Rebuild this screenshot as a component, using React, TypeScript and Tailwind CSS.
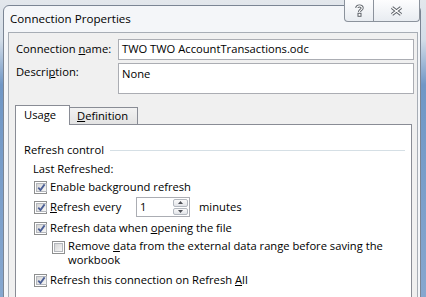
import type { ReactElement, ReactNode } from 'react';

/** Win7-style checkbox */
function CheckBox({ checked }: { checked: boolean }): ReactElement {
  return (
    <span className="flex h-[13px] w-[13px] shrink-0 border border-[#8e8f8f] bg-white p-px">
      <span className="flex flex-1 items-center justify-center border border-[#b4b7bc] bg-[linear-gradient(135deg,#d6d6d6,#f6f6f6)]">
        {checked && (
          <svg width="9" height="9" viewBox="0 0 9 9">
            <path d="M1.3 4.6 L3.5 7 L7.6 1.4" fill="none" stroke="#4b5f96" strokeWidth="1.8" />
          </svg>
        )}
      </span>
    </span>
  );
}

function CheckRow({ checked, children, className }: { checked: boolean; children: ReactNode; className: string }): ReactElement {
  return (
    <div className={`flex h-[16px] items-center gap-[3px] pl-[18px] ${className}`}>
      <CheckBox checked={checked} />
      <span>{children}</span>
    </div>
  );
}

export default function App(): ReactElement {
  return (
    <div className="h-[297px] w-[426px] overflow-hidden bg-[linear-gradient(180deg,#e3e7ec_0px,#d3dde8_40px,#7097c6_85px,#86a7cf_297px)] font-['Open_Sans',sans-serif] text-[11.2px] text-black">
      <div className="ml-[3px] mt-[5px] flex h-[300px] w-[418px] flex-col rounded-t-[6px] border border-[#7b8594] bg-[#f4f6f9]">
        {/* title bar */}
        <div className="flex h-[26px] shrink-0 items-center pl-[6px]">
          <span className="text-[11.6px]">Connection Properties</span>
          <div className="-mt-[6px] ml-auto flex h-[22px] self-start">
            <div className="flex w-[30px] items-center justify-center rounded-bl-[4px] border border-t-0 border-[#8b929c] bg-[linear-gradient(180deg,#fdfdfe,#e8ecf1)]">
              <svg width="9" height="13" viewBox="0 0 9 13">
                <path d="M1.8 4 C1.8 1.2 7.2 1.2 7.2 4 C7.2 5.8 4.5 6 4.5 8" fill="none" stroke="#5a5f66" strokeWidth="3" />
                <path d="M1.8 4 C1.8 1.2 7.2 1.2 7.2 4 C7.2 5.8 4.5 6 4.5 8" fill="none" stroke="#ffffff" strokeWidth="1.2" />
                <rect x="3" y="9.3" width="3" height="3" fill="#ffffff" stroke="#5a5f66" strokeWidth="1" />
              </svg>
            </div>
            <div className="flex w-[46px] items-center justify-center rounded-br-[4px] border border-l-0 border-t-0 border-[#8b929c] bg-[linear-gradient(180deg,#fdfdfe,#e8ecf1)]">
              <svg width="13" height="10" viewBox="0 0 13 10">
                <path d="M2 1.5 L11 8.5 M11 1.5 L2 8.5" fill="none" stroke="#5a5f66" strokeWidth="3.4" />
                <path d="M2 1.5 L11 8.5 M11 1.5 L2 8.5" fill="none" stroke="#ffffff" strokeWidth="1.4" />
              </svg>
            </div>
          </div>
        </div>

        {/* client area */}
        <div className="ml-[4px] flex w-[410px] flex-1 flex-col border border-[#a7adb5] bg-[#f0f0f0] pt-[6px]">
          <div className="flex h-[21px] items-center pl-[7px]">
            <span className="w-[102px]">
              Connection <u>n</u>ame:
            </span>
            <div className="flex h-[21px] w-[296px] items-center border border-[#abadb3] bg-white pl-[3px]">
              TWO TWO AccountTransactions.odc
            </div>
          </div>
          <div className="mt-[3px] flex h-[31px] pl-[7px]">
            <span className="w-[102px] pt-[1px]">
              Descri<u>p</u>tion:
            </span>
            <div className="h-[31px] w-[296px] border border-[#abadb3] bg-white pl-[3px] pt-[2px]">None</div>
          </div>

          {/* tabs */}
          <div className="ml-[6px] mt-[11px] flex items-end">
            <div className="relative z-10 -mb-px flex h-[20px] w-[55px] items-center border border-b-0 border-[#898c95] bg-white pl-[8px]">
              Usa<u>g</u>e
            </div>
            <div className="flex h-[17px] w-[68px] items-center border border-b-0 border-l-0 border-[#898c95] bg-[linear-gradient(180deg,#f2f2f2,#e3e3e3)] pl-[7px]">
              <u>D</u>efinition
            </div>
          </div>
          <div className="ml-[6px] mr-[5px] flex flex-1 flex-col border border-[#898c95] bg-white">
            <div className="mt-[17px] flex h-[16px] items-center pl-[8px] pr-[6px]">
              <span>Refresh control</span>
              <div className="ml-[6px] h-px flex-1 bg-[#d5dfe5]" />
            </div>
            <div className="mt-[3px] flex h-[16px] items-center pl-[17px]">Last Refreshed:</div>
            <CheckRow checked className="mt-[2px]">
              Enable back<u>g</u>round refresh
            </CheckRow>
            <div className="mt-[2px] flex h-[20px] items-center gap-[3px] pl-[18px]">
              <CheckBox checked />
              <span className="w-[83px]">
                <u>R</u>efresh every
              </span>
              <div className="flex h-[20px] w-[54px] items-center border border-[#abadb3] bg-white pl-[3px]">
                <span className="flex-1">1</span>
                <div className="mr-px flex h-[16px] w-[15px] flex-col gap-px">
                  <div className="flex flex-1 items-center justify-center rounded-[2px] border border-[#b3b8bf] bg-[linear-gradient(180deg,#fbfbfb,#e2e4e8)]">
                    <svg width="5" height="3" viewBox="0 0 5 3">
                      <path d="M0 3 L2.5 0 L5 3 Z" fill="#4d5056" />
                    </svg>
                  </div>
                  <div className="flex flex-1 items-center justify-center rounded-[2px] border border-[#b3b8bf] bg-[linear-gradient(180deg,#fbfbfb,#e2e4e8)]">
                    <svg width="5" height="3" viewBox="0 0 5 3">
                      <path d="M0 0 L5 0 L2.5 3 Z" fill="#4d5056" />
                    </svg>
                  </div>
                </div>
              </div>
              <span className="ml-[6px]">minutes</span>
            </div>
            <CheckRow checked className="mt-[3px]">
              Refresh data when <u>o</u>pening the file
            </CheckRow>
            <div className="mt-[3px] flex items-start gap-[3px] pl-[36px] leading-[14px]">
              <span className="mt-[2px]">
                <CheckBox checked={false} />
              </span>
              <span>
                Remove <u>d</u>ata from the external data range before saving the
                <br />
                workbook
              </span>
            </div>
            <CheckRow checked className="mt-[5px]">
              Refresh this connection on Refresh <u>A</u>ll
            </CheckRow>
          </div>
        </div>
      </div>
    </div>
  );
}
